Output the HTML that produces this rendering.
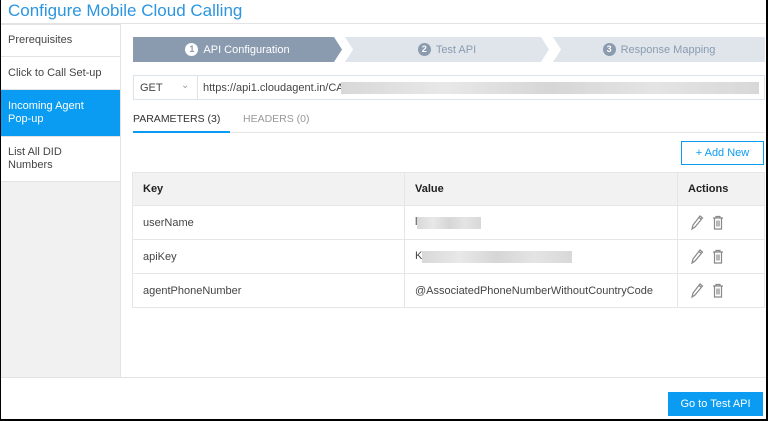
<!DOCTYPE html>
<html><head><meta charset="utf-8"><style>
*{margin:0;padding:0;box-sizing:border-box}
body{width:768px;height:421px;background:#000;font-family:"Liberation Sans",sans-serif;overflow:hidden;position:relative}
.page{position:absolute;left:1px;top:0;width:765px;height:419px;background:#fff}
.a{position:absolute}
.title{left:7px;top:1px;font-size:17px;color:#2b95e0;white-space:nowrap}
.side{left:0;top:24px;width:120px;height:354px;background:#f1f1f1;border-right:1px solid #e3e3e3;border-top:1px solid #e3e3e3}
.item{background:#fff;border-bottom:1px solid #e3e3e3;font-size:11px;color:#444;padding-left:7px;display:flex;align-items:center;line-height:13px}
.sel{background:#0a9cf2;color:#fff}
.step{top:37px;height:25px;font-size:11px;display:flex;align-items:center;justify-content:center}
.num{display:inline-block;width:13px;height:13px;border-radius:50%;font-size:9px;font-weight:bold;text-align:center;line-height:13px;margin-right:5px}
.blur{background:linear-gradient(90deg,#d8d8d8,#e8e8e8,#d6d6d6,#e4e4e4,#d8d8d8)}
table{border-collapse:collapse;font-size:11px;color:#444}
td,th{border:1px solid #e6e6e6;height:34px;text-align:left;padding-left:10px}
th{background:#f2f2f2;color:#222;font-weight:bold;height:33px}
</style></head><body><div class="page">
<div class="a title">Configure Mobile Cloud Calling</div>
<div class="a" style="left:0;top:23px;width:765px;height:1px;background:#e3e3e3"></div>
<div class="a side">
<div class="item" style="height:32px">Prerequisites</div>
<div class="item" style="height:33px">Click to Call Set-up</div>
<div class="item sel" style="height:47px">Incoming Agent<br>Pop-up</div>
<div class="item" style="height:45px">List All DID<br>Numbers</div>
</div>
<svg class="a" style="left:132px;top:37px" width="632" height="25">
<polygon points="0,0 201,0 209,12.5 201,25 0,25" fill="#8a9bb0"/>
<polygon points="212,0 408,0 416,12.5 408,25 212,25 220,12.5" fill="#dfe5eb"/>
<polygon points="420,0 632,0 632,25 420,25 428,12.5" fill="#dfe5eb"/>
</svg>
<div class="a step" style="left:132px;width:209px;color:#fff"><span class="num" style="background:#fff;color:#8a9bb0">1</span>API Configuration</div>
<div class="a step" style="left:344px;width:204px;color:#8a9bb0"><span class="num" style="background:#8a9bb0;color:#fff">2</span>Test API</div>
<div class="a step" style="left:552px;width:212px;color:#8a9bb0"><span class="num" style="background:#8a9bb0;color:#fff">3</span>Response Mapping</div>
<div class="a" style="left:132px;top:75px;width:632px;height:25px;border:1px solid #dde3ea"></div>
<div class="a" style="left:196px;top:76px;width:1px;height:23px;background:#dde3ea"></div>
<div class="a" style="left:139px;top:82px;font-size:11px;color:#444">GET</div>
<div class="a" style="left:180px;top:80px;font-size:10px;color:#999">&#8964;</div>
<div class="a" style="left:202px;top:82px;font-size:11px;color:#444">https://api1.cloudagent.in/CA</div>
<div class="a blur" style="left:340px;top:82px;width:418px;height:12px"></div>
<div class="a" style="left:132px;top:113px;font-size:10.5px;color:#333">PARAMETERS (3)</div>
<div class="a" style="left:242px;top:113px;font-size:10.5px;color:#999">HEADERS (0)</div>
<div class="a" style="left:132px;top:132px;width:632px;height:1px;background:#e6e6e6"></div>
<div class="a" style="left:132px;top:131px;width:97px;height:2px;background:#0a9cf2"></div>
<div class="a" style="left:680px;top:141px;width:83px;height:24px;border:1px solid #0a9cf2;color:#0a9cf2;font-size:11px;text-align:center;line-height:22px">+ Add New</div>
<table class="a" style="left:131px;top:172px;width:633px">
<tr><th style="width:272px">Key</th><th style="width:273px">Value</th><th>Actions</th></tr>
<tr><td>userName</td><td>l<span class="blur" style="display:inline-block;width:64px;height:12px;vertical-align:middle"></span></td><td></td></tr>
<tr><td>apiKey</td><td>K<span class="blur" style="display:inline-block;width:150px;height:12px;vertical-align:middle"></span></td><td></td></tr>
<tr><td>agentPhoneNumber</td><td>@AssociatedPhoneNumberWithoutCountryCode</td><td></td></tr>
</table>
<svg class="a" style="left:689px;top:214px" width="36" height="90">
<g fill="none" stroke="#888" stroke-width="1.2">
<g id="ic"><path d="M2 15 L3 11 L10 2 L12.5 4 L5 13 Z M9 3.5 L11.5 5.5"/><path d="M23 4h10M26 4V2.5h4V4M24.5 4v11h7V4M27 6.5v6M29 6.5v6"/></g>
<use href="#ic" y="34"/><use href="#ic" y="68"/>
</g></svg>
<div class="a" style="left:120px;top:377px;width:645px;height:1px;background:#e3e3e3"></div>
<div class="a" style="left:0;top:377px;width:120px;height:1px;background:#e3e3e3"></div>
<div class="a" style="left:667px;top:392px;width:95px;height:24px;background:#0a9cf2;color:#fff;font-size:11px;text-align:center;line-height:24px">Go to Test API</div>
</div></body></html>
